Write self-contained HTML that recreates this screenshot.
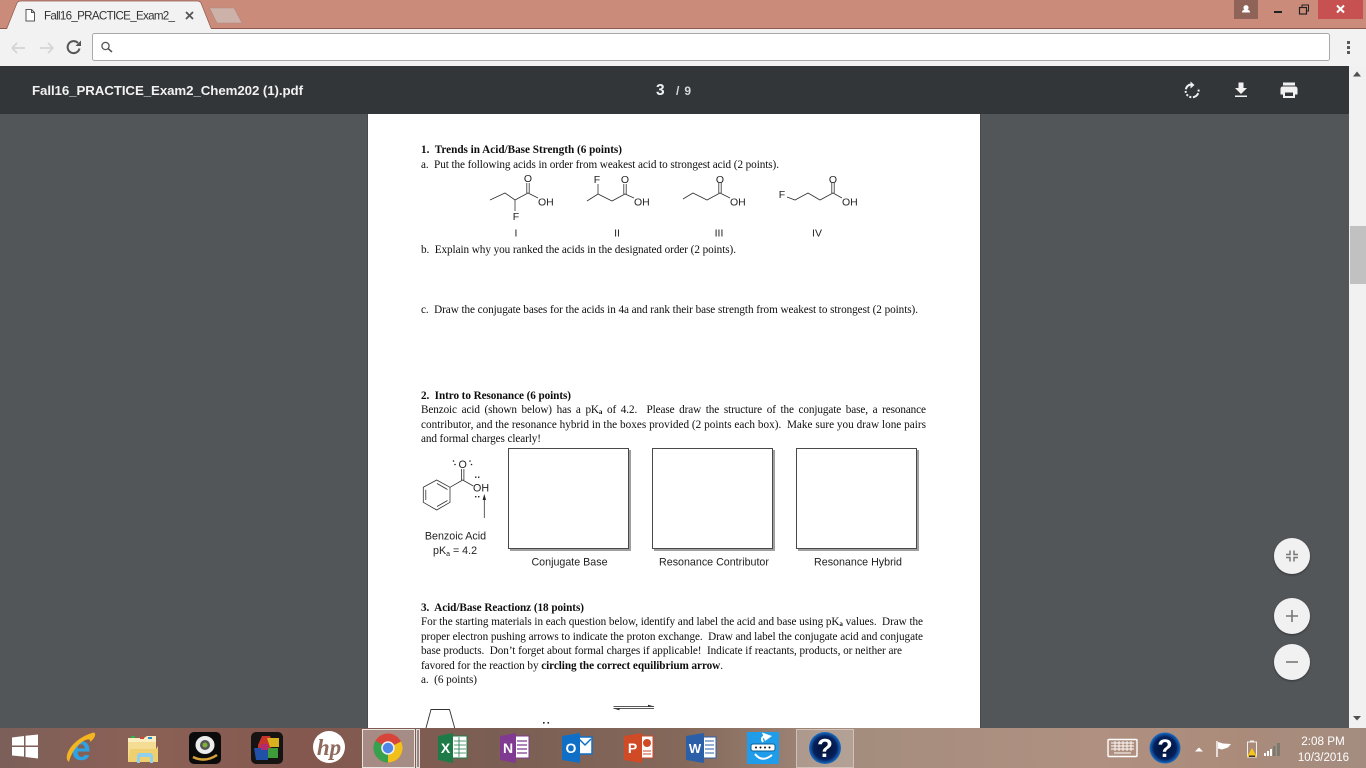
<!DOCTYPE html>
<html><head><meta charset="utf-8"><title>Fall16_PRACTICE_Exam2_Chem202 (1).pdf</title>
<style>
html,body{margin:0;padding:0;width:1366px;height:768px;overflow:hidden;background:#525659}
svg{display:block;position:absolute;left:0;top:0}
.s{font-family:"Liberation Serif",serif;font-size:11.2px;fill:#111}
.b{font-weight:bold}
.a{font-family:"Liberation Sans",sans-serif;font-size:10.7px;fill:#222}
.c{font-family:"Liberation Sans",sans-serif}
</style></head><body>
<svg width="1366" height="768" viewBox="0 0 1366 768" xmlns="http://www.w3.org/2000/svg">
<defs>
<linearGradient id="tb" x1="0" x2="1" y1="0" y2="0">
<stop offset="0" stop-color="#7c5f59"/><stop offset=".1" stop-color="#8b6156"/><stop offset=".22" stop-color="#84584e"/><stop offset=".36" stop-color="#7b5e53"/><stop offset=".5" stop-color="#84685a"/><stop offset=".62" stop-color="#a48d7e"/><stop offset=".8" stop-color="#b09080"/><stop offset=".9" stop-color="#ab8b7a"/><stop offset="1" stop-color="#a38c7f"/>
</linearGradient>
<radialGradient id="q"><stop offset="0" stop-color="#02102f"/><stop offset=".72" stop-color="#05205c"/><stop offset="1" stop-color="#1a6fc8"/></radialGradient>
<filter id="sh" x="-30%" y="-30%" width="160%" height="160%"><feDropShadow dx="0" dy="1.2" stdDeviation="1" flood-color="#000" flood-opacity=".35"/></filter>
<filter id="bl" x="0" y="0" width="100%" height="100%"><feGaussianBlur stdDeviation=".38"/></filter>
</defs>

<!-- title bar -->
<rect width="1366" height="28" fill="#cb8b7a"/>
<rect y="28" width="1366" height="1" fill="#8e5a50"/>
<path d="M7 29L17 3Q18 1 21 1H197Q200 1 201 3L211 29Z" fill="#f2f2f2"/>
<path d="M7 28L17 3Q18 1 21 1H197Q200 1 201 3L211 28" fill="none" stroke="#8e5a50" stroke-width=".7"/>
<path d="M209.5 8H234L242 23H217Z" fill="#cdb2aa" stroke="#b08a7e" stroke-width=".6"/>
<path d="M26 9.5H31.5L34.5 12.5V21H26Z M31.5 9.5V12.5H34.5" fill="#fff" stroke="#555" stroke-width="1"/>
<text class="c" x="44" y="19.5" font-size="11.6" fill="#333" textLength="131">Fall16_PRACTICE_Exam2_</text>
<path d="M186 12L193 19M193 12L186 19" stroke="#555" stroke-width="1.8"/>
<rect x="1234" y="0" width="24" height="19" fill="#8f6358"/>
<path d="M1242 12.5Q1242 10 1244.5 9.8A2.6 2.6 0 1 1 1247.5 9.8Q1250 10 1250 12.5Z" fill="#fff"/>
<rect x="1274" y="11" width="8" height="2" fill="#222"/>
<rect x="1299.5" y="7.5" width="7" height="6.5" fill="none" stroke="#222" stroke-width="1.2"/>
<path d="M1302 7V5H1308.5V11H1306.5" fill="none" stroke="#222" stroke-width="1"/>
<rect x="1318" y="0" width="45" height="19" fill="#c75050"/>
<path d="M1337 5.5L1344 12.5M1344 5.5L1337 12.5" stroke="#fff" stroke-width="2"/>

<!-- toolbar -->
<rect y="29" width="1366" height="37" fill="#f2f2f2"/>
<path d="M12 48H25M12 48L17 43M12 48L17 53" fill="none" stroke="#d4d4d4" stroke-width="1.7"/>
<path d="M40 48H53M53 48L48 43M53 48L48 53" fill="none" stroke="#d4d4d4" stroke-width="1.7"/>
<path d="M79.5 48.5A6 6 0 1 1 78 43" fill="none" stroke="#555" stroke-width="2"/>
<path d="M75.5 46H81V40.5Z" fill="#555"/>
<rect x="92.5" y="33.5" width="1237" height="27" rx="2" fill="#fff" stroke="#a9a9a9" stroke-width="1"/>
<circle cx="105.5" cy="46" r="3.6" fill="none" stroke="#555" stroke-width="1.3"/>
<path d="M108 48.5L112 52" stroke="#555" stroke-width="1.5"/>
<g fill="#5a5a5a"><rect x="1347" y="41" width="3" height="3"/><rect x="1347" y="46" width="3" height="3"/><rect x="1347" y="51" width="3" height="3"/></g>

<!-- viewer -->
<rect y="66" width="1349" height="662" fill="#525659"/>
<rect x="1349" y="66" width="17" height="662" fill="#f1f1f1"/>
<rect x="1350" y="226" width="16" height="58" fill="#c1c1c1"/>
<path d="M1353 76.5L1357 71.5L1361 76.5Z" fill="#505050"/>
<path d="M1353 716L1361 716L1357 720.5Z" fill="#505050"/>
<rect x="368" y="114" width="612" height="614" fill="#fff"/>
<rect x="367" y="114" width="1" height="614" fill="#3d4043" opacity=".5"/>
<rect x="980" y="114" width="1" height="614" fill="#3d4043" opacity=".5"/>
<rect y="66" width="1349" height="48" fill="#323639"/>
<text class="c" x="32" y="95" font-size="13.3" font-weight="bold" fill="#f1f1f1" textLength="271">Fall16_PRACTICE_Exam2_Chem202 (1).pdf</text>
<text class="c" x="656" y="95" font-size="15.5" font-weight="bold" fill="#f1f1f1">3</text>
<text class="c" x="676" y="95" font-size="12" font-weight="bold" fill="#d8d8d8" textLength="15">/ 9</text>
<path d="M1190.5 84.5A6.5 6.5 0 1 0 1198 88" fill="none" stroke="#f1f1f1" stroke-width="2" stroke-dasharray="7 1.6 2 1.6 2 1.6 2 1.6"/>
<path d="M1190.5 81.5L1194.500 85L1190.500 88.500Z" fill="#f1f1f1"/>
<path d="M1238.5 82.5H1243.5V88H1247L1241 94L1235 88H1238.5Z M1235 95.5H1247V97H1235Z" fill="#f1f1f1"/>
<path d="M1283 82.5H1295V85.5H1283Z" fill="#f1f1f1"/>
<path d="M1283 86.5H1295Q1297.5 86.5 1297.5 89V94.5H1295V98H1283V94.5H1280.5V89Q1280.5 86.5 1283 86.5Z M1285 92.5V96H1293V92.5Z" fill="#f1f1f1" fill-rule="evenodd"/>

<!-- zoom buttons -->
<g filter="url(#sh)" fill="#f1f1f1"><circle cx="1292" cy="556" r="18"/><circle cx="1292" cy="616" r="18"/><circle cx="1292" cy="662" r="18"/></g>
<path d="M1290 550.5V554.5H1286M1294 550.5V554.5H1298M1290 561.5V557.5H1286M1294 561.5V557.5H1298" fill="none" stroke="#777" stroke-width="1.5"/>
<path d="M1286 616H1298M1292 610V622" stroke="#777" stroke-width="1.6"/>
<path d="M1286 662H1298" stroke="#777" stroke-width="1.6"/>

<!-- document -->
<g filter="url(#bl)">
<text class="s b" x="421" y="153" textLength="201">1.&#160; Trends in Acid/Base Strength (6 points)</text>
<text class="s" x="421" y="168" textLength="358">a.&#160; Put the following acids in order from weakest acid to strongest acid (2 points).</text>
<g fill="none" stroke="#333" stroke-width=".8">
<path d="M490 200L505 193L515 200L528 193L538 198M515 200V211M526.8 193V183M529.2 193V183"/>
<path d="M587 201L598 194L612 201L625 194L634 198M598 194V184M623.8 194V184M626.2 194V184"/>
<path d="M683 199L693 193L707 200L720 193L730 198M718.8 193V183M721.2 193V183"/>
<path d="M787 197L795 200L808 193L820 200L833 193L842 198M831.8 193V183M834.2 193V183"/>
</g>
<g font-size="10.5" fill="#222" font-family="Liberation Sans, sans-serif">
<text x="528" y="182" text-anchor="middle">O</text><text x="538" y="205.5">OH</text><text x="516" y="220" text-anchor="middle">F</text>
<text x="597" y="183" text-anchor="middle">F</text><text x="625" y="183" text-anchor="middle">O</text><text x="634" y="205.5">OH</text>
<text x="720" y="183" text-anchor="middle">O</text><text x="730" y="205.5">OH</text>
<text x="782" y="198" text-anchor="middle">F</text><text x="833" y="183" text-anchor="middle">O</text><text x="842" y="205.5">OH</text>
<text x="516" y="236.5" text-anchor="middle">I</text><text x="617" y="236.5" text-anchor="middle">II</text><text x="719" y="236.5" text-anchor="middle">III</text><text x="817" y="236.5" text-anchor="middle">IV</text>
</g>
<text class="s" x="421" y="253" textLength="315">b.&#160; Explain why you ranked the acids in the designated order (2 points).</text>
<text class="s" x="421" y="313" textLength="497">c.&#160; Draw the conjugate bases for the acids in 4a and rank their base strength from weakest to strongest (2 points).</text>

<text class="s b" x="421" y="399" textLength="150">2.&#160; Intro to Resonance (6 points)</text>
<text class="s" x="421" y="413" textLength="505" word-spacing="2">Benzoic acid (shown below) has a pK<tspan font-size="7" dy="1" font-weight="bold">a</tspan><tspan dy="-1"> of 4.2.&#160; Please draw the structure of the conjugate base, a resonance</tspan></text>
<text class="s" x="421" y="428" textLength="505">contributor, and the resonance hybrid in the boxes provided (2 points each box).&#160; Make sure you draw lone pairs</text>
<text class="s" x="421" y="442" textLength="120">and formal charges clearly!</text>

<g fill="none" stroke="#333" stroke-width=".8">
<path d="M436.7 480L450 487.3V502.3L436.7 510L423.3 502.3V487.3Z"/>
<path d="M437 483.5L447.5 489.5M447.5 500.5L437 506.5M425.8 500V489.8"/>
<path d="M450 487.3L462.7 480L473.3 486M461.5 480V469M463.9 480V469"/>
<path d="M484.3 518V499"/>
</g>
<path d="M484.3 494L486 500H482.6Z" fill="#222"/>
<g font-family="Liberation Sans, sans-serif" font-size="10.7" fill="#222">
<text x="462.7" y="468" text-anchor="middle">O</text>
<text x="473" y="491.500">OH</text>
<text x="455.500" y="539.500" text-anchor="middle">Benzoic Acid</text>
<text x="433" y="554">pK<tspan font-size="7" dy="2">a</tspan><tspan dy="-2"> = 4.2</tspan></text>
</g>
<g fill="#222"><circle cx="453.5" cy="461" r=".8"/><circle cx="455" cy="464.5" r=".8"/><circle cx="470" cy="461" r=".8"/><circle cx="471.5" cy="464.5" r=".8"/><rect x="475" y="476.5" width="1.400" height="1.400"/><rect x="478" y="476.5" width="1.400" height="1.400"/><rect x="475" y="496" width="1.400" height="1.400"/><rect x="478" y="496" width="1.400" height="1.400"/></g>

<g fill="none" stroke="#a0a0a0" stroke-width="2">
<path d="M510 550H630V450"/><path d="M654 550H774V450"/><path d="M798 550H918V450"/>
</g>
<g fill="#fff" stroke="#4a4a4a" stroke-width="1">
<rect x="508.5" y="448.5" width="120" height="100"/>
<rect x="652.5" y="448.5" width="120" height="100"/>
<rect x="796.5" y="448.5" width="120" height="100"/>
</g>
<text class="a" x="569.5" y="565.5" text-anchor="middle">Conjugate Base</text>
<text class="a" x="714" y="565.5" text-anchor="middle">Resonance Contributor</text>
<text class="a" x="858" y="565.5" text-anchor="middle">Resonance Hybrid</text>

<text class="s b" x="421" y="611" textLength="163">3.&#160; Acid/Base Reactionz (18 points)</text>
<text class="s" x="421" y="625" textLength="502">For the starting materials in each question below, identify and label the acid and base using pK<tspan font-size="7" dy="1" font-weight="bold">a</tspan><tspan dy="-1"> values.&#160; Draw the</tspan></text>
<text class="s" x="421" y="640" textLength="502">proper electron pushing arrows to indicate the proton exchange.&#160; Draw and label the conjugate acid and conjugate</text>
<text class="s" x="421" y="654" textLength="481">base products.&#160; Don’t forget about formal charges if applicable!&#160; Indicate if reactants, products, or neither are</text>
<text class="s" x="421" y="669" textLength="302">favored for the reaction by <tspan font-weight="bold">circling the correct equilibrium arrow</tspan>.</text>
<text class="s" x="421" y="683" textLength="56">a.&#160; (6 points)</text>

<path d="M426 728L431 709.5H449.5L454.7 728" fill="none" stroke="#333" stroke-width=".9"/>
<rect x="543" y="722" width="1.600" height="1.600" fill="#222"/><rect x="547.5" y="722" width="1.600" height="1.600" fill="#222"/>
<path d="M613.5 706.5H654M613.5 708.5H654" stroke="#222" stroke-width=".8"/>
<path d="M654 706.5L648 704.8V706.5Z M613.5 708.5L619.5 710.2V708.5Z" fill="#222"/>
</g>

<!-- taskbar -->
<rect y="728" width="1366" height="40" fill="url(#tb)"/>
<rect x="362.5" y="729.5" width="52" height="38" fill="#fff" fill-opacity=".3" stroke="#e8e4e0"/>
<rect x="416.5" y="729.5" width="3" height="38" fill="#fff" fill-opacity=".25" stroke="#ddd"/>
<rect x="796.5" y="729.5" width="57" height="38" fill="#fff" fill-opacity=".18" stroke="#d9cdc5" stroke-opacity=".8"/>

<path d="M12 737.500L24 736V745.500H12ZM25.500 735.800L38 734.500V745.500H25.500ZM12 747H24V756.600L12 755.500ZM25.500 747H38V758.500L25.500 757Z" fill="#fff"/>

<text x="81" y="760" text-anchor="middle" font-family="Liberation Sans, sans-serif" font-size="35" font-weight="bold" fill="#2ea3e3">e</text>
<path d="M69 762C62 757 72 739 92 733C97 731 96 738 90 742C92 735 74 742 69 762Z" fill="#f4b51e"/>

<path d="M128 738H156V762H128Z" fill="#f4dc94"/>
<path d="M128 738H144L147 736H156V742H128Z" fill="#f9eec0"/>
<rect x="131" y="736" width="4" height="2" fill="#2fb24a"/><rect x="140" y="737" width="4" height="2" fill="#d0453a"/><rect x="148" y="737" width="4" height="2" fill="#2a8fd8"/>
<path d="M130 749H156L158 746V762H128Z" fill="#f0d06e"/>
<path d="M137 763V756Q137 753 140 753H150Q153 753 153 756V763H150V757H140V763Z" fill="#8fd0ee"/>

<rect x="189" y="732" width="32" height="32" rx="5" fill="#0b0b0b"/>
<ellipse cx="205" cy="745" rx="9.5" ry="9" fill="#ececec"/><circle cx="205" cy="745" r="5" fill="#555"/><circle cx="205" cy="745" r="2.5" fill="#7fb23a"/>
<path d="M193 757Q205 763 217 755" fill="none" stroke="#d8a23a" stroke-width="2.5"/>

<rect x="251" y="732" width="32" height="32" rx="5" fill="#161412"/>
<path d="M258 745L262 736H270L274 745L268 750L272 757L262 757L258 752Z" fill="#c4342c"/>
<path d="M267 738H279V747H270Z" fill="#d8b21e"/><path d="M254 748H268V760H256Z" fill="#2050a8"/><path d="M268 748H278V758H268Z" fill="#3f9a3a"/><path d="M261 744H268V750H261Z" fill="#b02a72"/>

<circle cx="329" cy="747" r="16" fill="#fff"/>
<text x="329" y="755" text-anchor="middle" font-family="Liberation Serif, serif" font-style="italic" font-weight="bold" font-size="23" fill="#8f6a5e">hp</text>

<circle cx="388" cy="748" r="14.5" fill="#d8433a"/>
<path d="M388 748L375.5 755.3A14.500 14.500 0 0 0 388 762.500L395 748Z" fill="#36a24d"/>
<path d="M388 748L375.5 755.3A14.500 14.500 0 0 1 375.500 740.700Z" fill="#36a24d"/>
<path d="M388 748L401 741.5A14.500 14.500 0 0 1 388 762.500Z" fill="#f2c01a"/>
<circle cx="388" cy="748" r="6.8" fill="#eee"/><circle cx="388" cy="748" r="5.2" fill="#4b86e8"/>

<!-- office -->
<rect x="451" y="736" width="16" height="22" fill="#fff" stroke="#1c7a46"/><path d="M454 741H466M454 745H466M454 749H466M454 753H466M459 737V757" stroke="#1c7a46" stroke-width=".8"/>
<path d="M438 736L453 733V763L438 760Z" fill="#1e7b47"/><text x="445.5" y="753" text-anchor="middle" class="c" font-weight="bold" font-size="14" fill="#fff">X</text>

<rect x="513" y="736" width="16" height="22" fill="#fff" stroke="#7d3a8e"/><path d="M517 741H527M517 745H527M517 749H527M517 753H527" stroke="#7d3a8e" stroke-width="1.2"/>
<path d="M500 736L516 733V763L500 760Z" fill="#813a92"/><text x="508" y="753" text-anchor="middle" class="c" font-weight="bold" font-size="14" fill="#fff">N</text>

<rect x="578" y="737" width="14" height="17" fill="#fff" stroke="#0f6fc6" stroke-width="1.5"/><path d="M579 739L585 745L591 739" fill="none" stroke="#0f6fc6" stroke-width="1.5"/>
<path d="M562 736L580 733V763L562 760Z" fill="#0f6fc6"/><text x="571" y="753" text-anchor="middle" class="c" font-weight="bold" font-size="14" fill="#fff">O</text>

<rect x="639" y="736" width="14" height="22" fill="#fff" stroke="#d04a26"/><path d="M643 751H651M643 754H651" stroke="#d04a26"/><circle cx="647" cy="743" r="4" fill="#d04a26"/>
<path d="M624 736L642 733V763L624 760Z" fill="#d04a26"/><text x="632.5" y="753" text-anchor="middle" class="c" font-weight="bold" font-size="14" fill="#fff">P</text>

<rect x="702" y="737" width="14" height="21" fill="#fff" stroke="#2b5fa8"/><path d="M705 741H714M705 745H714M705 749H714M705 753H714" stroke="#2b5fa8"/>
<path d="M686 736L704 733V763L686 760Z" fill="#2b5fa8"/><text x="695" y="753" text-anchor="middle" class="c" font-weight="bold" font-size="13" fill="#fff">W</text>

<rect x="747" y="732" width="32" height="32" fill="#1f9dea"/>
<rect x="751" y="744" width="24" height="7" rx="2" fill="#fff" stroke="#0e5f96"/>
<g fill="#111"><circle cx="756" cy="747.5" r="1"/><circle cx="760.5" cy="747.5" r="1"/><circle cx="765" cy="747.5" r="1"/><circle cx="769.5" cy="747.5" r="1"/></g>
<path d="M755 754Q762 763 772 755M763 742Q760 737 766 736" fill="none" stroke="#fff" stroke-width="2"/>
<path d="M762 732.5L772 736L765 741Z" fill="#fff"/>

<circle cx="825" cy="748" r="16" fill="url(#q)"/>
<text x="825" y="757" text-anchor="middle" class="c" font-weight="bold" font-size="26" fill="#fff">?</text>

<!-- tray -->
<rect x="1108" y="739.5" width="29" height="17" rx="1" fill="none" stroke="#fff" stroke-width="1.4"/>
<path d="M1111 743H1134M1111 746H1134M1111 749H1134M1115 741V751M1119 741V751M1123 741V751M1127 741V751M1131 741V751M1114 753H1131" stroke="#fff" stroke-width=".9"/>
<circle cx="1165" cy="748" r="15.5" fill="url(#q)"/>
<text x="1165" y="757" text-anchor="middle" class="c" font-weight="bold" font-size="25" fill="#fff">?</text>
<path d="M1195 751.500L1199 747.500L1203 751.500Z" fill="#fff"/>
<path d="M1217 741V757" stroke="#fff" stroke-width="1.4"/><path d="M1218 742L1223 743.500L1231 744L1228 747.500L1222 749.500L1218 748.500Z" fill="#fff"/>
<rect x="1247.500" y="742" width="9" height="15" fill="none" stroke="#eee" stroke-width="1"/><rect x="1250" y="740.500" width="4" height="1.500" fill="#eee"/>
<path d="M1252 748L1257 757H1247Z" fill="#f6c51c"/>
<rect x="1249" y="755.500" width="6" height="1.500" fill="#333"/>
<g fill="#fff"><rect x="1264" y="753" width="2" height="3"/><rect x="1267" y="751" width="2" height="5"/><rect x="1270" y="749" width="2" height="7"/></g>
<rect x="1273" y="746" width="2.500" height="10" fill="#7a7a70"/><rect x="1277" y="743" width="3" height="13" fill="#7a7a70"/>
<text class="c" x="1323" y="745" text-anchor="middle" font-size="11.700" fill="#fff">2:08 PM</text>
<text class="c" x="1323.500" y="761" text-anchor="middle" font-size="11.500" fill="#fff">10/3/2016</text>
</svg>
</body></html>
